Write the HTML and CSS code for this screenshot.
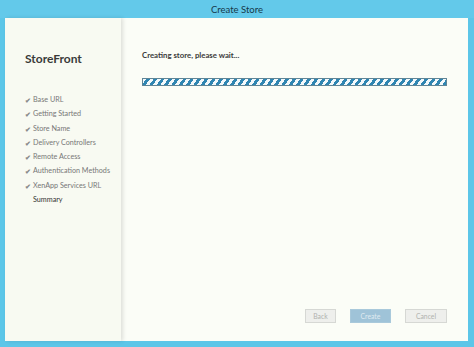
FILE: index.html
```html
<!DOCTYPE html>
<html lang="en">
<head>
    <meta charset="UTF-8">
    <title>Create Store</title>
    <link rel="stylesheet" href="styles.css">
</head>
<body>

    <div class="janela">
        <div class="titulo">Create Store</div>

        <div class="interior">
            <div class="lateral">
                <h1>StoreFront</h1>
                <ul class="passos">
                    <li class="feito">Base URL</li>
                    <li class="feito">Getting Started</li>
                    <li class="feito">Store Name</li>
                    <li class="feito">Delivery Controllers</li>
                    <li class="feito">Remote Access</li>
                    <li class="feito">Authentication Methods</li>
                    <li class="feito">XenApp Services URL</li>
                    <li class="atual">Summary</li>
                </ul>
            </div>

            <div class="conteudo">
                <p class="msg">Creating store, please wait...</p>
                <div class="barra"></div>

                <div class="botoes">
                    <button class="btn voltar">Back</button>
                    <button class="btn criar">Create</button>
                    <button class="btn cancelar">Cancel</button>
                </div>
            </div>
        </div>
    </div>

</body>
</html>
```

FILE: styles.css
```css
body {
    margin: 0;
    padding: 0;
    background-color: #5cc6e8;
    font-family: Lato, "Open Sans", sans-serif;
}

.janela {
    width: 474px;
    height: 347px;
    display: flex;
    flex-direction: column;
}

.titulo {
    height: 18px;
    line-height: 19px;
    text-align: center;
    font-size: 9.5px;
    color: #17394a;
    background-color: #63c9ea;
}

.interior {
    flex: 1;
    display: flex;
    margin: 0 6px 6px 5px;
    background-color: #f6f9ee;
}

/* Lateral */
.lateral {
    width: 116px;
    padding-left: 20px;
    box-sizing: border-box;
    background-color: #f8faf2;
    box-shadow: 2px 0 4px rgba(0, 0, 0, 0.12);
    position: relative;
    z-index: 1;
}

.lateral h1 {
    margin: 33px 0 0 0;
    font-size: 12px;
    font-weight: 700;
    color: #3a3a3a;
    line-height: 16px;
}

.passos {
    list-style: none;
    margin: 26px 0 0 0;
    padding: 0;
}

.passos li {
    font-size: 7.2px;
    color: #777;
    height: 14.3px;
    line-height: 14px;
    padding-left: 8px;
    position: relative;
    white-space: nowrap;
}

.passos li.feito::before {
    content: "✔";
    position: absolute;
    left: 0;
    top: 0;
    font-size: 7px;
    font-weight: 700;
    color: #8a8a8a;
}

.passos li.atual {
    color: #333;
}

/* Conteudo */
.conteudo {
    flex: 1;
    display: flex;
    flex-direction: column;
    padding: 0 21px 18px 21px;
    background-color: #fbfdf7;
}

.msg {
    margin: 32px 0 0 0;
    font-size: 7.8px;
    font-weight: 700;
    color: #3a3a3a;
    line-height: 10px;
}

.barra {
    margin-top: 18px;
    height: 6px;
    border: 1px solid #5f8596;
    background: repeating-linear-gradient(
        -55deg,
        #2f86b2 0px,
        #2f86b2 3px,
        #f4f9fb 3px,
        #f4f9fb 6px
    );
}

.botoes {
    margin-top: auto;
    display: flex;
    justify-content: flex-end;
    gap: 14px;
}

.btn {
    height: 14px;
    padding: 0;
    font-family: Lato, "Open Sans", sans-serif;
    font-size: 6.8px;
    border: 1px solid #d6d8d4;
    background-color: #eeefec;
    color: #b0b2ae;
}

.voltar {
    width: 31px;
}

.criar {
    width: 41px;
    background-color: #9fc3d8;
    border-color: #a9c9db;
    color: #dfeaf0;
}

.cancelar {
    width: 42px;
}
```
